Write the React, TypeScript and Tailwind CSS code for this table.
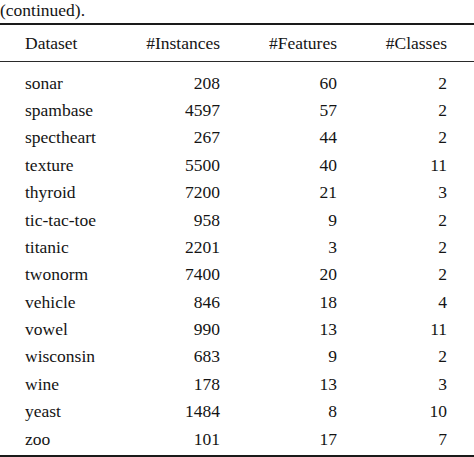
const rows: [string, number, number, number][] = [
  ["sonar", 208, 60, 2],
  ["spambase", 4597, 57, 2],
  ["spectheart", 267, 44, 2],
  ["texture", 5500, 40, 11],
  ["thyroid", 7200, 21, 3],
  ["tic-tac-toe", 958, 9, 2],
  ["titanic", 2201, 3, 2],
  ["twonorm", 7400, 20, 2],
  ["vehicle", 846, 18, 4],
  ["vowel", 990, 13, 11],
  ["wisconsin", 683, 9, 2],
  ["wine", 178, 13, 3],
  ["yeast", 1484, 8, 10],
  ["zoo", 101, 17, 7],
];

const cols = "grid grid-cols-[100px_95px_117px_110px] pl-[25px] [font-family:Liberation_Serif,serif]";

export default function App() {
  return (
    <div className="w-[474px] h-[457px] overflow-hidden bg-white text-[#141414] text-[17.5px]">
      <p className="h-[23px] leading-[20px] [font-family:Liberation_Serif,serif]">(continued).</p>
      <div className="border-t-2 border-[#1a1a1a]">
        <div className={`${cols} h-[36px] items-center`}>
          <span>Dataset</span>
          <span className="text-right">#Instances</span>
          <span className="text-right">#Features</span>
          <span className="text-right">#Classes</span>
        </div>
        <div className="border-t-[1.5px] border-[#2a2a2a] pt-[7px] pb-[3px]">
          {rows.map(([name, inst, feat, cls]) => (
            <div key={name} className={`${cols} h-[27.4px] items-center`}>
              <span>{name}</span>
              <span className="text-right">{inst}</span>
              <span className="text-right">{feat}</span>
              <span className="text-right">{cls}</span>
            </div>
          ))}
        </div>
        <div className="border-t-2 border-[#1a1a1a]" />
      </div>
    </div>
  );
}
